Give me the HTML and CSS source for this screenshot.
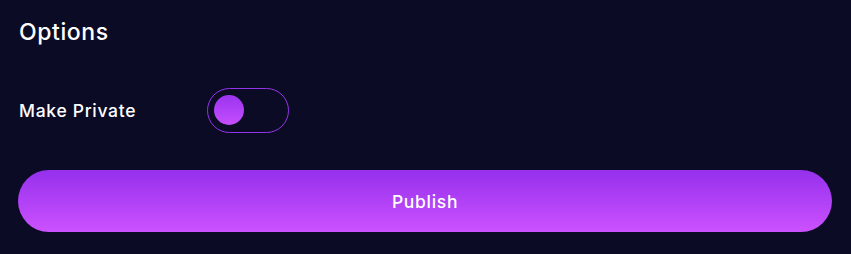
FILE: index.html
```html
<!DOCTYPE html>
<html lang="en">
<head>
    <meta charset="UTF-8">
    <meta name="viewport" content="width=device-width, initial-scale=1.0">
    <title>Options</title>
    <link rel="stylesheet" href="styles.css">
</head>
<body>
    <div class="options">
        <h2>Options</h2>

        <div class="option-row">
            <label class="option-label" for="private">Make Private</label>
            <label class="switch">
                <input type="checkbox" id="private">
                <span class="knob"></span>
            </label>
        </div>

        <button class="publish-button">Publish</button>
    </div>
</body>
</html>
```

FILE: styles.css
```css
body {
    margin: 0;
    background-color: #0b0b26;
    font-family: Inter, "Open Sans", sans-serif;
    color: #fff;
}
.options {
    padding: 17px 19px 22px 18px;
}
h2 {
    margin: 0;
    font-size: 23px;
    font-weight: 500;
    line-height: 30px;
    letter-spacing: 0.6px;
    padding-left: 1px;
}
.option-row {
    display: flex;
    align-items: center;
    margin-top: 41px;
}
.option-label {
    width: 188px;
    padding-left: 1px;
    font-size: 17.5px;
    font-weight: 500;
    letter-spacing: 0.7px;
}
.switch {
    position: relative;
    display: block;
    flex: none;
    width: 80px;
    height: 43px;
    border: 1px solid #9333ea;
    border-radius: 23px;
    cursor: pointer;
}
.switch input {
    display: none;
}
.knob {
    position: absolute;
    top: 6px;
    left: 6px;
    width: 30px;
    height: 30px;
    border-radius: 50%;
    background: linear-gradient(#9a34ee, #c64eff);
}
.switch input:checked + .knob {
    left: 44px;
}
.publish-button {
    display: block;
    width: 100%;
    height: 62px;
    margin-top: 37px;
    border: none;
    border-radius: 31px;
    background: linear-gradient(#9530ec, #cc52ff);
    color: #fff;
    font-family: inherit;
    font-size: 17.5px;
    font-weight: 500;
    letter-spacing: 0.7px;
    cursor: pointer;
}
```
